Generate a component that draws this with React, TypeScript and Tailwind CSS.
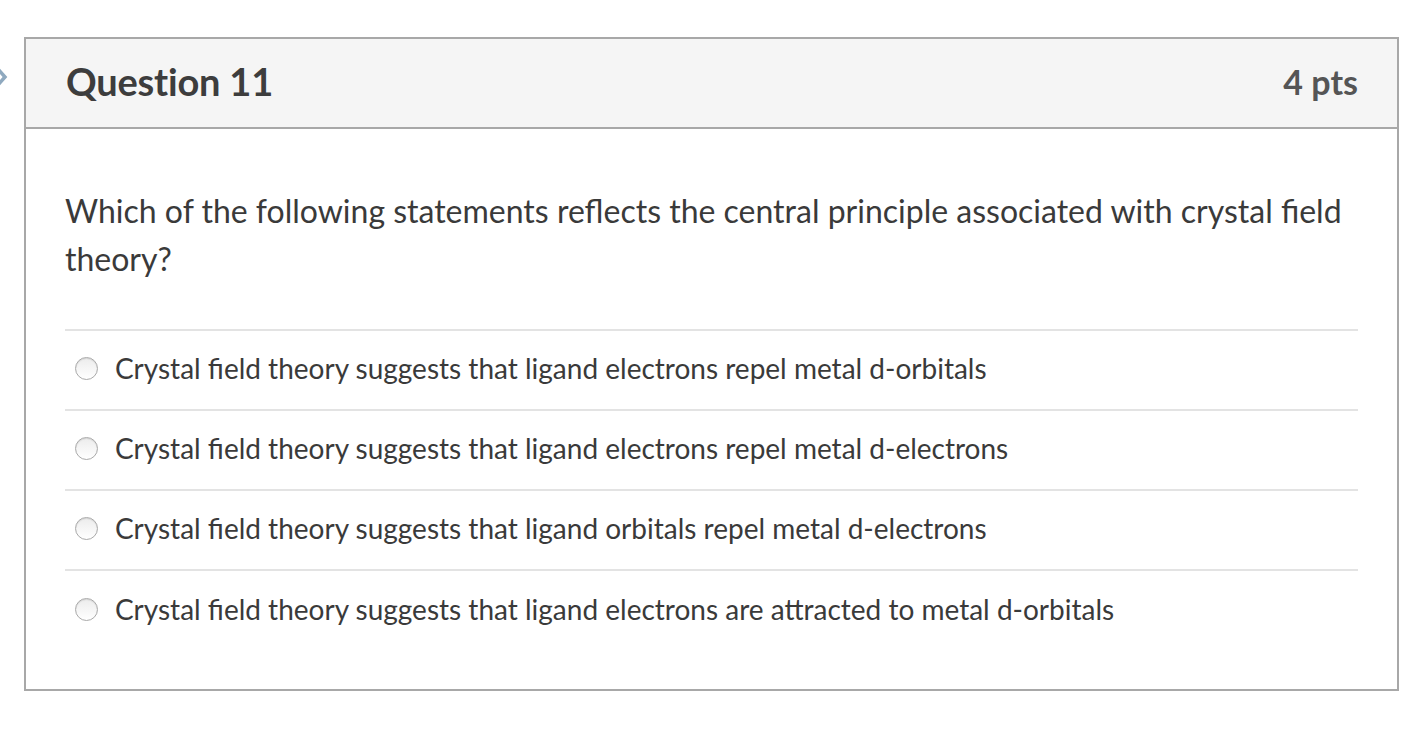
import React from 'react';

const answers = [
  'Crystal field theory suggests that ligand electrons repel metal d-orbitals',
  'Crystal field theory suggests that ligand electrons repel metal d-electrons',
  'Crystal field theory suggests that ligand orbitals repel metal d-electrons',
  'Crystal field theory suggests that ligand electrons are attracted to metal d-orbitals',
];

const Radio: React.FC = () => (
  <span className="block w-[23px] h-[23px] rounded-full border border-[#a9a9a9] bg-gradient-to-b from-[#ececec] to-white shadow-[inset_0_1px_1px_rgba(0,0,0,0.1)] shrink-0" />
);

export default function App() {
  return (
    <div className="relative w-[1423px] h-[731px] bg-white font-['Lato','Open_Sans',sans-serif] pt-[37px] pl-[24px]">
      {/* bit of the nav arrow peeking in on the left */}
      <svg className="absolute left-0 top-[66px] blur-[0.6px]" width="10" height="22" viewBox="0 0 10 22">
        <path d="M-3 2 L5 11 L-3 20" fill="none" stroke="#8fa9bf" strokeWidth="3.5" />
      </svg>

      <div className="w-[1375px] h-[654px] border-2 border-[#a8a8a8] flex flex-col">
        <header className="h-[90px] bg-[#f5f5f5] border-b-2 border-[#a8a8a8] flex items-center justify-between pl-[40px] pr-[39px] pb-[4px]">
          <h2 className="text-[38px] font-bold text-[#3d3d3d] tracking-[-0.2px]">Question 11</h2>
          <span className="text-[34px] font-bold text-[#555]">4 pts</span>
        </header>

        <div className="pl-[39px] pr-[39px] pt-[58px]">
          <p className="text-[32px] leading-[48px] text-[#3a3a3a]">
            Which of the following statements reflects the central principle associated with crystal field theory?
          </p>

          <div className="mt-[46px] border-t-2 border-[#e3e3e3]">
            {answers.map((a, i) => (
              <label
                key={i}
                className={`flex items-center gap-[17px] pl-[10px] pb-[4px] h-[80px] ${i < answers.length - 1 ? 'border-b-2 border-[#e3e3e3]' : ''}`}
              >
                <Radio />
                <span className="text-[28px] text-[#3a3a3a]">{a}</span>
              </label>
            ))}
          </div>
        </div>
      </div>
    </div>
  );
}
